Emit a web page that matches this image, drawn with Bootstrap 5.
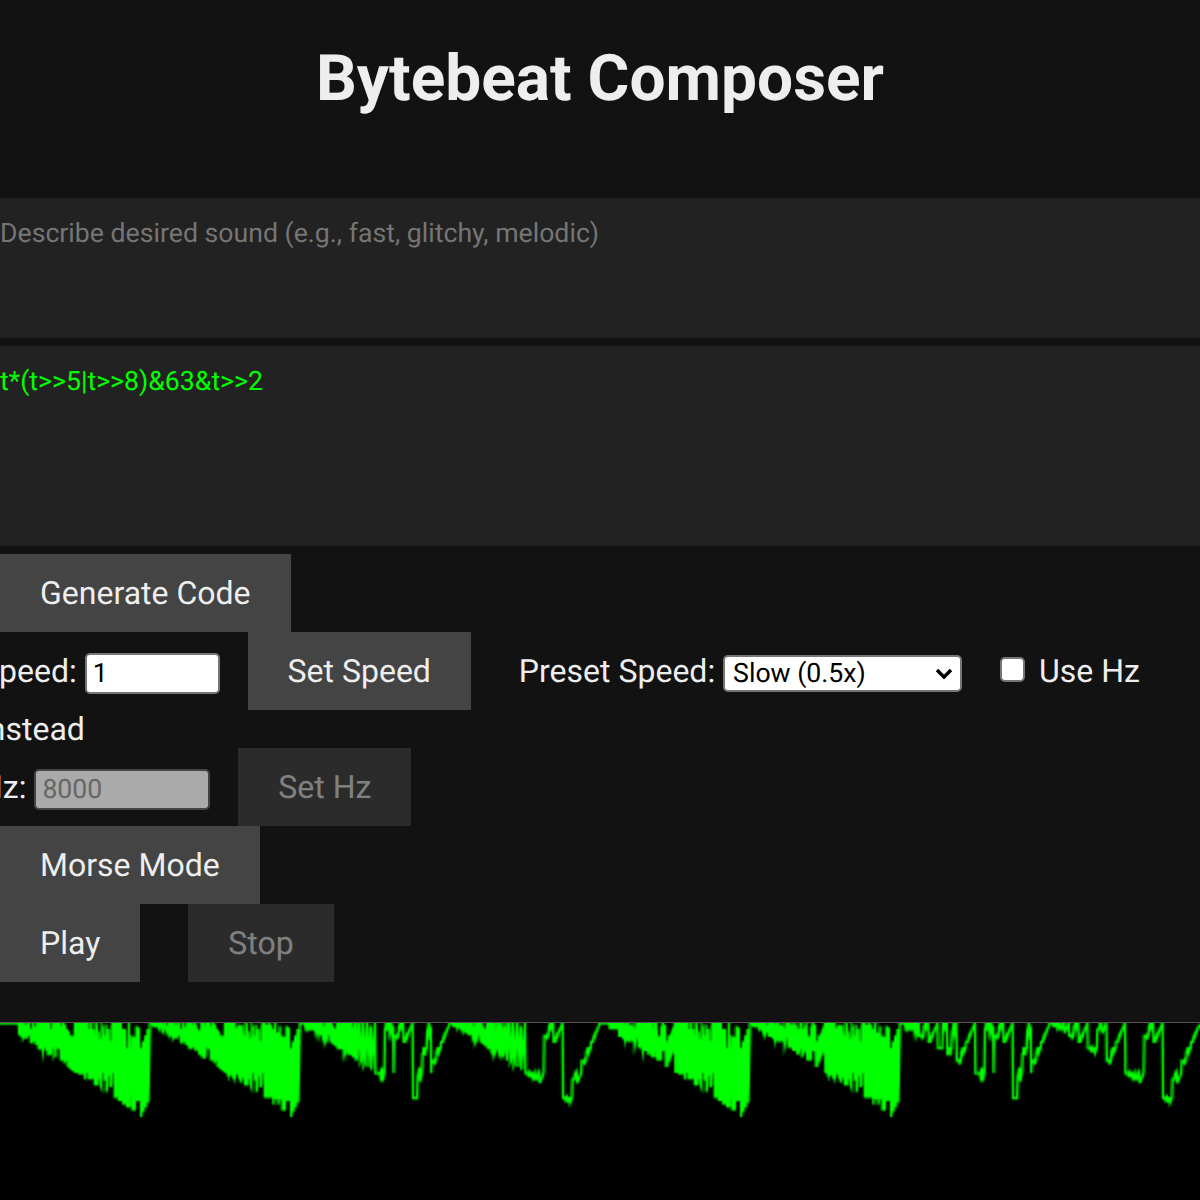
<!DOCTYPE html>
<html lang="en"><head><meta charset="utf-8"><title>Bytebeat Composer</title>
<link href="https://cdn.jsdelivr.net/npm/bootstrap@5.3.0/dist/css/bootstrap.min.css" rel="stylesheet">
<style>
html,body{overflow:hidden;height:1200px}
body{background:#121212;color:#eee;font-family:Roboto,"Liberation Sans",sans-serif;font-size:32px;line-height:38px;text-rendering:geometricPrecision}
.app-title{font-size:64px;font-weight:700;line-height:70px;text-align:center;margin:44px 0 84px;color:#eee}
.pad{display:block;width:1260px;margin:0 0 8px -20px;padding:16px 20px;background:#222;border:0;outline:0;border-radius:0;font-family:inherit;font-size:26.67px;line-height:38px;resize:none;text-rendering:geometricPrecision}
.pad::placeholder{color:#757575;opacity:1}
.pad-prompt{height:140px;color:#eee}
.pad-code{height:200px;color:#0f0}
.flow{margin-left:-20px;width:1240px}
.act{--bs-btn-disabled-bg:#444;--bs-btn-disabled-color:#eee;--bs-btn-disabled-opacity:.5;display:inline-block;background:#444;color:#eee;border:0;border-radius:0;font-size:32px;line-height:38px;padding:20px 40px;margin:0 20px;vertical-align:baseline;text-rendering:geometricPrecision}
.act:hover{background:#444;color:#eee}
.lbl-gap{margin-left:20px}
.lbl-run{display:inline}
.num-in{display:inline-block;box-sizing:border-box;width:135px;height:41px;border:2px solid #767676;border-radius:5px;padding:0 6px;background:#fff;color:#000;font:26.67px/37px Roboto,sans-serif;vertical-align:baseline;outline:0;text-rendering:geometricPrecision}
.num-wide{width:176px}
.num-in:disabled{background:#aaa;color:#666;border-color:#444;opacity:1}
.sel-in{display:inline-block;box-sizing:border-box;width:239px;height:37px;border:2px solid #767676;border-radius:5px;padding:0 30px 0 8px;background:#fff url("data:image/svg+xml,%3Csvg xmlns='http://www.w3.org/2000/svg' viewBox='0 0 20 14'%3E%3Cpath d='M3 3l7 7 7-7' fill='none' stroke='%23000' stroke-width='3.4'/%3E%3C/svg%3E") no-repeat right 6px center/20px 14px;color:#000;font:26.67px/33px Roboto,sans-serif;appearance:none;outline:0;vertical-align:baseline;text-rendering:geometricPrecision}
.chk-in{appearance:none;display:inline-block;box-sizing:border-box;width:25px;height:25px;border:2px solid #767676;border-radius:5px;background:#fff;margin:0 14px 0 30px;vertical-align:baseline}
.wave{display:block;width:1200px;height:400px;margin-top:40px;background:#000;box-sizing:content-box;border-top:1px solid #555}
</style></head>
<body>
<h1 class="app-title">Bytebeat Composer</h1>
<textarea class="pad pad-prompt" placeholder="Describe desired sound (e.g., fast, glitchy, melodic)"></textarea>
<textarea class="pad pad-code">t*(t&gt;&gt;5|t&gt;&gt;8)&amp;63&amp;t&gt;&gt;2</textarea>
<div class="flow">
<div><button class="btn act">Generate Code</button></div>
<div>
<label for="spd">Speed:</label> <input id="spd" class="num-in" type="number" value="1"> <button class="btn act">Set Speed</button>
<label class="lbl-gap" for="pre">Preset Speed:</label> <select id="pre" class="sel-in"><option>Slow (0.5x)</option></select> <input id="hz" class="chk-in" type="checkbox"><label class="lbl-run" for="hz">Use Hz instead</label>
</div>
<div><label for="hzv">Hz:</label> <input id="hzv" class="num-in num-wide" type="number" value="8000" disabled> <button class="btn act" disabled>Set Hz</button></div>
<div><button class="btn act">Morse Mode</button></div>
<div><button class="btn act">Play</button> <button class="btn act" disabled>Stop</button></div>
</div>
<canvas id="wave" class="wave" width="600" height="200"></canvas>
<script>
const c=document.getElementById('wave'),x=c.getContext('2d');
x.fillStyle='#000';x.fillRect(0,0,600,200);x.strokeStyle='#0f0';x.lineWidth=1.25;x.beginPath();
for(let i=0;i<2048;i++){const t=40*256+i,v=(t*(t>>5|t>>8))&63&(t>>2),X=i*600/2048,Y=v*.78125;i?x.lineTo(X,Y):x.moveTo(X,Y);}
x.stroke();
</script>
</body></html>
